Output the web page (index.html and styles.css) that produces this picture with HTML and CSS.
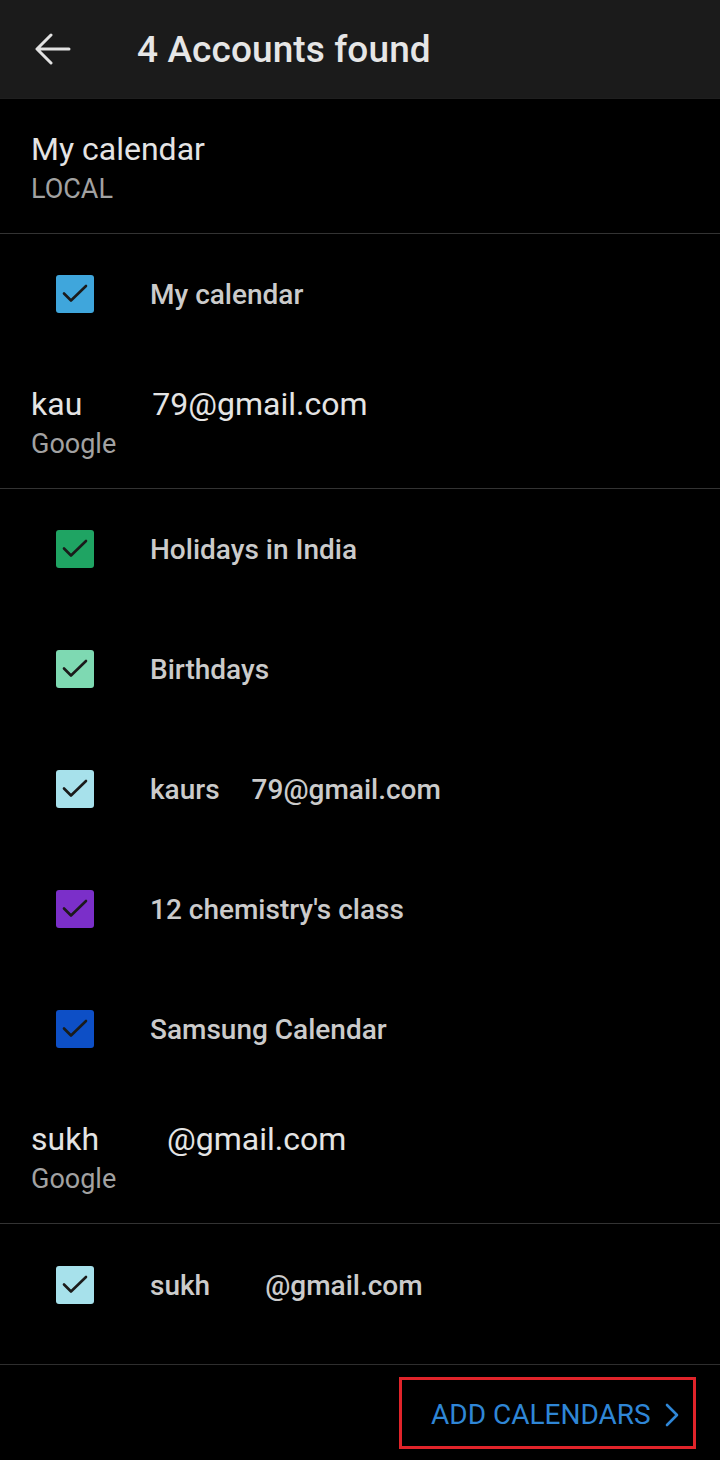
FILE: index.html
```html
<!DOCTYPE html>
<html lang="en">
    <head>
        <meta charset="UTF-8">
        <meta name="viewport" content="width=device-width, initial-scale=1.0">
        <title>4 Accounts found</title>
        <link rel="stylesheet" href="styles.css">
    </head>
    <body>
        <header class="topbar">
            <svg class="back" width="36" height="32" viewBox="0 0 36 32">
                <path d="M34 16 H3 M16 2 L2 16 L16 30" fill="none" stroke="#e2e2e2" stroke-width="3" stroke-linecap="round" stroke-linejoin="round"/>
            </svg>
            <h1 class="title">4 Accounts found</h1>
        </header>

        <main class="list">
            <div class="account">
                <div class="account-name">My calendar</div>
                <div class="account-type">LOCAL</div>
            </div>
            <div class="row">
                <span class="check" style="background: #3fa6dc"></span>
                <span class="label">My calendar</span>
            </div>

            <div class="account">
                <div class="account-name">kau<span class="mask w70"></span>79@gmail.com</div>
                <div class="account-type">Google</div>
            </div>
            <div class="row">
                <span class="check" style="background: #1fa463"></span>
                <span class="label">Holidays in India</span>
            </div>
            <div class="row">
                <span class="check" style="background: #7ed9b2"></span>
                <span class="label">Birthdays</span>
            </div>
            <div class="row">
                <span class="check" style="background: #a7e1eb"></span>
                <span class="label">kaurs<span class="mask w32"></span>79@gmail.com</span>
            </div>
            <div class="row">
                <span class="check" style="background: #7b2fc9"></span>
                <span class="label">12 chemistry's class</span>
            </div>
            <div class="row">
                <span class="check" style="background: #0d4fc6"></span>
                <span class="label">Samsung Calendar</span>
            </div>

            <div class="account">
                <div class="account-name">sukh<span class="mask w68"></span>@gmail.com</div>
                <div class="account-type">Google</div>
            </div>
            <div class="row last">
                <span class="check" style="background: #a7e1eb"></span>
                <span class="label">sukh<span class="mask w55"></span>@gmail.com</span>
            </div>
        </main>

        <footer class="bottombar">
            <button class="add">
                ADD CALENDARS
                <svg width="16" height="24" viewBox="0 0 16 24">
                    <path d="M3 2 L13 12 L3 22" fill="none" stroke="#2f86d6" stroke-width="2.6" stroke-linecap="round" stroke-linejoin="round"/>
                </svg>
            </button>
        </footer>

        <script>
            // every checkbox gets the same tick
            document.querySelectorAll(".check").forEach(function (box) {
                box.innerHTML = '<svg width="38" height="38" viewBox="0 0 38 38"><path d="M8 18.5 L15 25.5 L30 11" fill="none" stroke="#1b1b1b" stroke-width="2.6" stroke-linecap="round" stroke-linejoin="round"/></svg>';
            });
        </script>
    </body>
</html>
```

FILE: styles.css
```css
body {
    margin: 0;
    background-color: #000000;
    font-family: Roboto, "Noto Sans", sans-serif;
    color: #e4e4e4;
}

.topbar {
    height: 98px;
    background-color: #1b1b1b;
    display: flex;
    align-items: center;
    padding-left: 35px;
    box-sizing: border-box;
}

.back {
    display: block;
}

.title {
    margin: 0 0 0 66px;
    font-size: 37px;
    font-weight: 500;
    color: #e6e6e6;
    letter-spacing: 0.1px;
}

.list {
    border-top: 1px solid #1f1f1f;
    padding-bottom: 18px;
}

.account {
    height: 135px;
    box-sizing: border-box;
    padding: 31px 0 0 31px;
    border-bottom: 1px solid #333333;
}

.account-name {
    font-size: 32px;
    line-height: 38px;
    color: #e4e4e4;
    white-space: nowrap;
}

.account-type {
    font-size: 27px;
    line-height: 43px;
    color: #a2a2a2;
}

.mask {
    display: inline-block;
}

.w32 { width: 32px; }
.w55 { width: 55px; }
.w68 { width: 68px; }
.w70 { width: 70px; }

.row {
    height: 120px;
    display: flex;
    align-items: center;
    padding-left: 56px;
    gap: 56px;
}

.row.last {
    height: 122px;
}

.check {
    width: 38px;
    height: 38px;
    border-radius: 3px;
    flex: none;
}

.check svg {
    display: block;
}

.label {
    font-size: 28px;
    font-weight: 500;
    color: #cbcbcb;
    white-space: nowrap;
}

.bottombar {
    border-top: 1px solid #2e2e2e;
    height: 96px;
    box-sizing: border-box;
    display: flex;
    justify-content: flex-end;
    align-items: center;
    padding-right: 24px;
}

.add {
    background: none;
    border: 3px solid #e0242a;
    width: 297px;
    height: 72px;
    box-sizing: border-box;
    font-family: Roboto, "Noto Sans", sans-serif;
    font-size: 28px;
    color: #2f86d6;
    display: flex;
    align-items: center;
    gap: 13px;
    padding: 4px 0 0 29px;
}
```
